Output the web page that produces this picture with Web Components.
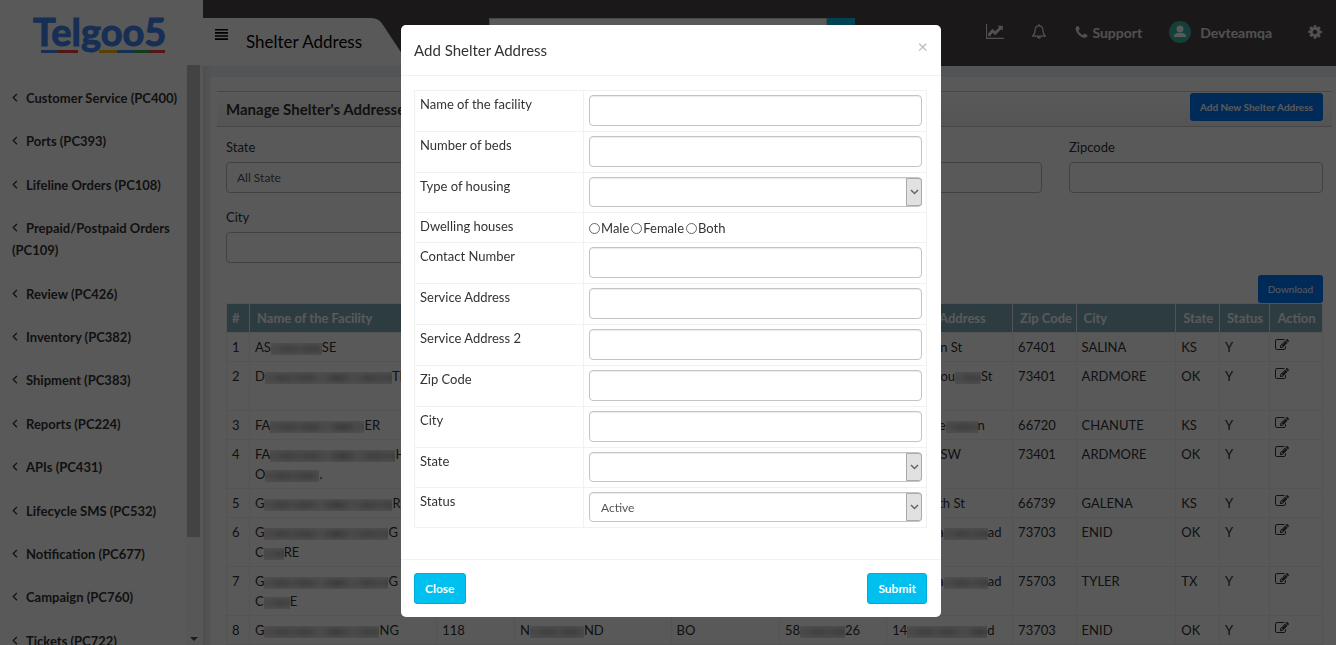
<!DOCTYPE html>
<html lang="en">
<head>
<meta charset="utf-8">
<title>Shelter Address</title>
<style>
    body {
        margin: 0;
        height: 100vh;
        overflow: hidden;
        font-family: Lato, "Liberation Sans", sans-serif;
        font-size: 13px;
        color: #333;
        background: #fff;
    }
</style>
</head>
<body>
<shelter-app></shelter-app>
<script>
class BaseElement extends HTMLElement {
    constructor() {
        super()
        this.attachShadow({ mode: 'open' })
    }
    connectedCallback() {
        const template = document.createElement('template');
        template.innerHTML = `<style>${this.getStyles()}</style>${this.getTemplate()}`;
        this.shadowRoot.replaceChildren(template.content.cloneNode(true))
    }
}

const icons = {
    edit: '<path d="M888 1184l116-116-152-152-116 116v56h96v96h56zM1328 464q-16-16-33 1l-350 350q-17 17-1 33t33-1l350-350q17-17 1-33zM1408 1058v190q0 119-84.500 203.500T1120 1536H288q-119 0-203.500-84.500T0 1248V416q0-119 84.500-203.500T288 128h832q63 0 117 25 15 7 18 23 3 17-9 29l-49 49q-14 14-32 8-23-6-45-6H288q-66 0-113 47t-47 113v832q0 66 47 113t113 47h832q66 0 113-47t47-113v-126q0-13 9-22l64-64q15-15 35-7t20 29zM1312 320l288 288-672 672H640V992zM1756 452l-92 92-288-288 92-92q28-28 68-28t68 28l152 152q28 28 28 68t-28 68z"/>',
    phone: '<path d="M1600 1240q0 27-10 70.500t-21 68.500q-21 50-122 106-94 51-186 51-27 0-53-3.500t-57.500-12.500-47-14.500-55.500-20.500-49-18q-98-35-175-83-127-79-264-216T344 904q-48-77-83-175-3-9-18-49t-20.500-55.500-14.500-47-12.500-57.500-3.500-53q0-92 51-186 56-101 106-122 25-11 68.500-21t70.500-10q14 0 21 3 18 6 53 76 11 19 30 54t35 63.500 31 53.500q3 4 17.500 25t21.500 35.500 7 28.500q0 20-28.500 50t-62 55-62 53-28.500 46q0 9 5 22.500t8.500 20.500 14 24 11.500 19q76 137 174 235t235 174q2 1 19 11.500t24 14 20.500 8.500 22.500 5q18 0 46-28.500t53-62 55-62 50-28.500q14 0 28.500 7t35.500 21.500 25 17.500q25 15 53.500 31t63.500 35 54 30q70 35 76 53 3 7 3 21z"/>',
    cog: '<path d="M1152 896q0-106-75-181t-181-75-181 75-75 181 75 181 181 75 181-75 75-181zm512-109v222q0 12-8 23t-20 13l-185 28q-19 54-39 91 35 50 107 138 10 12 10 25t-9 23q-27 37-99 108t-94 71q-12 0-26-9l-138-108q-44 23-91 38-16 136-29 186-7 28-36 28H785q-14 0-24.500-8.500T749 1574l-28-184q-49-16-90-37l-141 107q-10 9-25 9-14 0-25-11-126-114-165-168-7-10-7-23 0-12 8-23 15-21 51-66.500t54-70.500q-27-50-41-99l-183-27q-13-2-21-12.500t-8-23.500V785q0-12 8-23t19-13l186-28q14-46 39-92-40-57-107-138-10-12-10-24 0-10 9-23 26-36 98.500-107.500T464 266q13 0 26 10l138 107q44-23 91-38 16-136 29-186 7-28 36-28h222q14 0 24.500 8.500T1043 160l28 184q49 16 90 37l142-107q9-9 24-9 13 0 25 10 129 119 165 170 7 8 7 22 0 12-8 23-15 21-51 66.500t-54 70.500q26 50 41 98l183 28q13 2 21 12.500t8 23.500z"/>',
    chart: '<path d="M0 100h110v1380h1682v110H0zM200 1250V1060L640 560l270 250 390-370-150-160h520v500l-160-150-600 590-250-240-300 380z"/>',
    bell: '<path fill="none" stroke="currentColor" stroke-width="140" stroke-linejoin="round" d="M896 200c-300 0-430 230-430 480 0 380-90 500-290 690h1440c-200-190-290-310-290-690 0-250-130-480-430-480z"/><path d="M820 40h152v170H820zM680 1420h432c0 280-432 280-432 0z"/>',
    angle: '<path fill="none" stroke="currentColor" stroke-width="190" d="M1180 440L640 980l540 540"/>',
    bars: '<path d="M0 130h1792v230H0zM0 560h1792v230H0zM0 990h1792v230H0zM0 1420h1792v230H0z"/>'
};

// <ui-icon name="edit" size="14">
class UiIcon extends BaseElement {
    getTemplate() {
        const size = this.getAttribute('size') || 14;
        return `<svg width="${size}" height="${size}" viewBox="0 0 1792 1792" fill="currentColor" aria-hidden="true">${icons[this.getAttribute('name')]}</svg>`
    }
    getStyles() {
        return `
            :host { display: inline-block; line-height: 0; }
        `
    }
}
customElements.define('ui-icon', UiIcon)

// Masks part of a private value
class MaskedText extends BaseElement {
    getTemplate() {
        return `<span style="width:${this.getAttribute('width')}px"></span>`
    }
    getStyles() {
        return `
            :host { display: inline-block; vertical-align: middle; line-height: 0; }
            span {
                display: inline-block;
                height: 12px;
                background:
                    radial-gradient(ellipse at center, rgba(0,0,0,.14), transparent 75%) 0 0 / 29px 100%,
                    radial-gradient(ellipse at center, rgba(0,0,0,.10), transparent 75%) 9px 0 / 43px 100%,
                    #dcdcdc;
            }
        `
    }
}
customElements.define('masked-text', MaskedText)

class PrimaryButton extends BaseElement {
    getTemplate() {
        return `<button type="button"><slot></slot></button>`
    }
    getStyles() {
        return `
            :host { display: block; }
            button {
                display: block;
                height: 28px;
                padding: 0 10px;
                border: 0;
                border-radius: 3px;
                background: #007bff;
                color: #fff;
                font: 10px/28px Lato, sans-serif;
            }
            :host([bold]) button { font-weight: 700; }
        `
    }
}
customElements.define('primary-button', PrimaryButton)

class SideBar extends BaseElement {
    getTemplate() {
        const items = [
            'Customer Service (PC400)', 'Ports (PC393)', 'Lifeline Orders (PC108)',
            'Prepaid/Postpaid Orders (PC109)', 'Review (PC426)', 'Inventory (PC382)',
            'Shipment (PC383)', 'Reports (PC224)', 'APIs (PC431)', 'Lifecycle SMS (PC532)',
            'Notification (PC677)', 'Campaign (PC760)', 'Tickets (PC722)'
        ];
        return `
            <a class="logo" href="#">
                <svg width="140" height="54" viewBox="0 0 140 54" role="img" aria-label="Telgoo5">
                    <g>
                        <path fill="#4285f4" d="M9 43h17v3H9z"/>
                        <path fill="#ea4335" d="M26 43h20v3H26z"/>
                        <path fill="#fbbc05" d="M67 43h18v3H67z"/>
                        <path fill="#4285f4" d="M85 43h16v3H85z"/>
                        <path fill="#34a853" d="M101 43h16v3h-16z"/>
                        <path fill="#ea4335" d="M117 43h16v3h-16z"/>
                    </g>
                    <text x="1" y="39" fill="#4285f4" stroke="#4285f4" font-family="Lato" font-weight="700" font-size="38">Telgoo5</text>
                </svg>
            </a>
            <div class="scroll">
                <ul>
                    ${items.map(item => `<li><a href="#"><ui-icon name="angle" size="12"></ui-icon>${item}</a></li>`).join('')}
                </ul>
                <div class="bar"><i class="thumb"></i><i class="down"></i></div>
            </div>
        `
    }
    getStyles() {
        return `
            :host {
                display: flex;
                flex-direction: column;
                width: 203px;
                height: 100vh;
                background: #fff;
            }
            .logo { display: block; height: 58px; padding: 7px 0 0 32px; line-height: 0; }
            .logo svg { overflow: visible; }
            .scroll { display: flex; flex: 1; min-height: 0; overflow: hidden; }
            ul {
                display: flex;
                flex-direction: column;
                justify-content: space-between;
                flex: 1;
                height: calc(100vh - 80px);
                margin: 0;
                padding: 22px 2px 0 12px;
                list-style: none;
            }
            a { color: #333; font-weight: 700; line-height: 22px; text-decoration: none; }
            ui-icon { width: 14px; margin-left: -3px; padding-right: 3px; }
            .bar {
                display: flex;
                flex-direction: column;
                justify-content: space-between;
                align-items: center;
                width: 15px;
                padding: 0 2px 4px 0;
                background: #f9f9f9;
            }
            .thumb { width: 13px; height: 82%; background: #c1c1c1; }
            .down { border: 4px solid transparent; border-top-color: #505050; border-bottom: 0; }
        `
    }
}
customElements.define('side-bar', SideBar)

class TopBar extends BaseElement {
    getTemplate() {
        return `
            <div class="tab">
                <button type="button" aria-label="Menu"><ui-icon name="bars" size="13"></ui-icon></button>
                <h1><slot></slot></h1>
            </div>
            <form>
                <input type="search" aria-label="Search">
                <button type="button" aria-label="Go"></button>
            </form>
            <nav>
                <a href="#" aria-label="Statistics"><ui-icon name="chart" size="18"></ui-icon></a>
                <a href="#" aria-label="Alerts"><ui-icon name="bell" size="16"></ui-icon></a>
                <a class="support" href="#"><ui-icon name="phone" size="15"></ui-icon>Support</a>
                <a class="user" href="#">
                    <svg width="22" height="22" viewBox="0 0 22 22"><circle cx="11" cy="11" r="11" fill="#3cb4a0"/><circle cx="11" cy="8" r="3.500" fill="#fff"/><path fill="#fff" d="M5 16q0-4 4-4h4q4 0 4 4z"/></svg>
                    Devteamqa
                </a>
                <a href="#" aria-label="Settings"><ui-icon name="cog" size="16"></ui-icon></a>
            </nav>
        `
    }
    getStyles() {
        return `
            :host {
                display: flex;
                height: 66px;
                background: #4d474c;
            }
            .tab {
                display: flex;
                align-items: center;
                box-sizing: border-box;
                width: 218px;
                height: 48px;
                margin-top: 18px;
                padding-left: 12px;
                background: #fff;
                clip-path: path("M0 0H168Q176 0 180 7L215 60V48H0z");
            }
            .tab button { margin-top: -12px; padding: 0; border: 0; background: none; color: #000; }
            h1 { margin: 0 0 0 18px; font-size: 17px; font-weight: 400; line-height: 50px; color: #000; }
            form { display: flex; flex: 0 1 366px; height: 30px; margin: 18px auto 0 68px; }
            input { flex: 1; min-width: 0; border: 1px solid #ccc; background: #fff; }
            form button { width: 28px; border: 0; background: #00c0ef; }
            nav { display: flex; align-items: center; height: 64px; padding-right: 13px; }
            a { display: flex; align-items: center; color: #e8e8e8; font-size: 14px; font-weight: 700; text-decoration: none; }
            a + a { margin-left: 27px; }
            .support { gap: 3px; }
            a.user { gap: 9px; }
            a:last-child { margin-left: 35px; }
        `
    }
}
customElements.define('top-bar', TopBar)

class SearchPanel extends BaseElement {
    getTemplate() {
        return `
            <header>
                <h2>Manage Shelter's Addresses</h2>
                <primary-button bold>Add New Shelter Address</primary-button>
            </header>
            <form>
                <div><label for="state">State</label><select id="state"><option>All State</option></select></div>
                <div><label for="name"></label><input id="name" aria-label="Name"></div>
                <div><label for="address"></label><input id="address" aria-label="Address"></div>
                <div><label for="zip">Zipcode</label><input id="zip"></div>
                <div><label for="city">City</label><input id="city"></div>
            </form>
            <div class="tools"><primary-button>Download</primary-button></div>
        `
    }
    getStyles() {
        return `
            :host { display: block; }
            header {
                display: flex;
                justify-content: space-between;
                align-items: flex-start;
                height: 33px;
                margin-right: 4px;
                padding: 1px 9px 0 9px;
                border-top: 1px solid #ccc;
                border-bottom: 1px solid #ccc;
                background: linear-gradient(#fff, #f1f1f1);
            }
            h2 { margin: 0; font-size: 15px; line-height: 32px; }
            form {
                display: grid;
                grid-template-columns: repeat(4, 1fr);
                gap: 9px 27px;
                padding: 9px 13px 0 9px;
            }
            label { display: block; height: 23px; line-height: 23px; margin-bottom: 3px; }
            input, select {
                display: block;
                box-sizing: border-box;
                width: 100%;
                height: 31px;
                padding: 0 10px;
                border: 1px solid #bbb;
                border-radius: 4px;
                background: #fff;
                color: #555;
                font: 12px Lato, sans-serif;
                appearance: none;
            }
            form div { padding-bottom: 4px; }
            .tools { display: flex; justify-content: flex-end; padding: 8px 13px 0 0; }
        `
    }
}
customElements.define('search-panel', SearchPanel)

class ShelterTable extends BaseElement {
    getTemplate() {
        const m = width => `<masked-text width="${width}"></masked-text>`;
        const empty = ['', '', '', ''];
        // name, beds, housing, dwelling, contact, address, zip, city, state
        const rows = [
            [`AS${m(51)}SE`, ...empty, `${m(48)}n St`, '67401', 'SALINA', 'KS'],
            [`D${m(127)}TE`, ...empty, `${m(41)}bou${m(26)}St<br>&nbsp;`, '73401', 'ARDMORE', 'OK'],
            [`FA${m(94)}ER`, ...empty, `${m(40)}ve${m(32)}n`, '66720', 'CHANUTE', 'KS'],
            [`FA${m(125)}H<br>O${m(54)}.`, ...empty, `${m(45)} SW`, '73401', 'ARDMORE', 'OK'],
            [`G${m(128)}R`, ...empty, `${m(46)}th St`, '66739', 'GALENA', 'KS'],
            [`G${m(124)}G<br>C${m(20)}RE`, ...empty, `${m(45)}a${m(44)}ad`, '73703', 'ENID', 'OK'],
            [`G${m(124)}G<br>C${m(26)}E`, ...empty, `${m(45)}a${m(44)}ad`, '75703', 'TYLER', 'TX'],
            [`G${m(115)}NG`, '118', `N${m(54)}ND`, 'BO', `58${m(45)}26`, `14${m(80)}d`, '73703', 'ENID', 'OK']
        ];
        return `
            <table>
                <colgroup>${[2.1, 17.1, 7.1, 14.3, 9.9, 9.8, 11.5, 5.8, 9.1, 4, 4.6, 4.8].map(w => `<col style="width:${w}%">`).join('')}</colgroup>
                <thead>
                    <tr>
                        <th>#</th><th>Name of the Facility</th><th></th><th></th>
                        <th></th><th></th><th>Service Address</th><th>Zip Code</th>
                        <th>City</th><th>State</th><th>Status</th><th>Action</th>
                    </tr>
                </thead>
                <tbody>
                    ${rows.map((row, i) => `
                        <tr>
                            <td>${i + 1}</td>
                            ${row.map(cell => `<td>${cell}</td>`).join('')}
                            <td>Y</td>
                            <td><a href="#" aria-label="Edit"><ui-icon name="edit" size="14"></ui-icon></a></td>
                        </tr>`).join('')}
                </tbody>
            </table>
        `
    }
    getStyles() {
        return `
            :host { display: block; padding: 0 13px 0 9px; }
            table { width: 100%; table-layout: fixed; border-collapse: collapse; }
            th, td {
                padding: 4px 5px;
                border: 1px solid #f0f0f0;
                line-height: 20px;
                text-align: left;
                vertical-align: top;
                white-space: nowrap;
            }
            th {
                padding: 4px 7px;
                background: #80adbb;
                color: #fff;
            }
            th:first-child { padding: 4px 5px; }
            a { color: #333; }
        `
    }
}
customElements.define('shelter-table', ShelterTable)

class ShelterModal extends BaseElement {
    getTemplate() {
        const input = (id, label) => `<tr><th><label for="${id}">${label}</label></th><td><input type="text" id="${id}"></td></tr>`;
        const select = (id, label, value) => `
            <tr>
                <th><label for="${id}">${label}</label></th>
                <td><div class="select"><select id="${id}"><option>${value}</option></select><i><svg width="9" height="6" viewBox="0 0 9 6" fill="none" stroke="#666" stroke-width="1.500"><path d="M1 1l3.500 3.500L8 1"/></svg></i></div></td>
            </tr>`;
        return `
            <section role="dialog" aria-labelledby="title">
                <header>
                    <h3 id="title">Add Shelter Address</h3>
                    <button type="button" aria-label="Dismiss">×</button>
                </header>
                <main>
                    <table>
                        ${input('facility', 'Name of the facility')}
                        ${input('beds', 'Number of beds')}
                        ${select('housing', 'Type of housing', '')}
                        <tr>
                            <th>Dwelling houses</th>
                            <td>
                                <div class="radios">
                                    <label><input type="radio" name="dwelling">Male</label>
                                    <label><input type="radio" name="dwelling">Female</label>
                                    <label><input type="radio" name="dwelling">Both</label>
                                </div>
                            </td>
                        </tr>
                        ${input('contact', 'Contact Number')}
                        ${input('address1', 'Service Address')}
                        ${input('address2', 'Service Address 2')}
                        ${input('zipcode', 'Zip Code')}
                        ${input('city', 'City')}
                        ${select('state', 'State', '')}
                        ${select('status', 'Status', 'Active')}
                    </table>
                </main>
                <footer>
                    <button type="button">Close</button>
                    <button type="button">Submit</button>
                </footer>
            </section>
        `
    }
    getStyles() {
        return `
            :host {
                position: fixed;
                inset: 0;
                display: flex;
                justify-content: center;
                align-items: flex-start;
                padding: 25px 0 0 6px;
                background: rgba(0, 0, 0, .65);
            }
            section { width: 540px; border-radius: 5px; background: #fff; }
            header {
                display: flex;
                justify-content: space-between;
                align-items: center;
                height: 50px;
                padding: 0 13px;
                border-bottom: 1px solid #f1f1f1;
            }
            h3 { margin: 0; font-size: 15px; font-weight: 400; line-height: 50px; }
            header button { margin-top: -9px; padding: 0; border: 0; background: none; color: #bbb; font: 18px/20px Lato, sans-serif; }
            main { padding: 14px 14px 31px 13px; }
            table { width: 100%; border-collapse: collapse; }
            th, td {
                padding: 4px 4px 5px 5px;
                border: 1px solid #f1f1f1;
                font-weight: 400;
                text-align: left;
                vertical-align: top;
                line-height: 18px;
            }
            th { width: 159px; }
            input[type=text], select {
                display: block;
                box-sizing: border-box;
                width: 100%;
                height: 31px;
                padding: 0 11px;
                border: 1px solid #c4c4c4;
                border-radius: 4px;
                background: #fff;
                color: #555;
                font: 12px Lato, sans-serif;
                box-shadow: inset 0 1px 1px rgba(0, 0, 0, .08);
                appearance: none;
            }
            select { height: 30px; }
            .select { display: grid; }
            .select > * { grid-area: 1 / 1; }
            .select i {
                display: flex;
                justify-content: center;
                align-items: center;
                justify-self: end;
                width: 14px;
                margin: 1px 0;
                border: 1px solid #aaa;
                border-radius: 0 3px 3px 0;
                background: #e1e1e1;
                pointer-events: none;
            }
            .radios { display: flex; gap: 2px; padding-top: 2px; }
            .radios label { display: flex; align-items: center; }
            input[type=radio] {
                box-sizing: border-box;
                width: 11px;
                height: 11px;
                margin: 0 1px 0 0;
                border: 1px solid #666;
                border-radius: 50%;
                appearance: none;
            }
            footer {
                display: flex;
                justify-content: space-between;
                padding: 13px 14px 13px 13px;
                border-top: 1px solid #f1f1f1;
            }
            footer button {
                height: 31px;
                padding: 0 10px;
                border: 1px solid #00acd6;
                border-radius: 3px;
                background: #00c0ef;
                color: #fff;
                font: 700 12px Lato, sans-serif;
            }
        `
    }
}
customElements.define('shelter-modal', ShelterModal)

class ShelterApp extends BaseElement {
    getTemplate() {
        return `
            <side-bar></side-bar>
            <div class="page">
                <top-bar>Shelter Address</top-bar>
                <div class="content">
                    <div class="panel">
                        <search-panel></search-panel>
                        <shelter-table></shelter-table>
                    </div>
                </div>
            </div>
            <shelter-modal></shelter-modal>
        `
    }
    getStyles() {
        return `
            :host { display: flex; height: 100vh; overflow: hidden; }
            .page { display: flex; flex-direction: column; flex: 1; min-width: 0; }
            .content { flex: 1; padding: 11px 0 0 8px; background: linear-gradient(90deg, #dfe2e6, #edf0f4 8px); }
            .panel { min-height: 100%; padding: 14px 0 0 6px; background: #fff; }
        `
    }
}
customElements.define('shelter-app', ShelterApp)
</script>
</body>
</html>
